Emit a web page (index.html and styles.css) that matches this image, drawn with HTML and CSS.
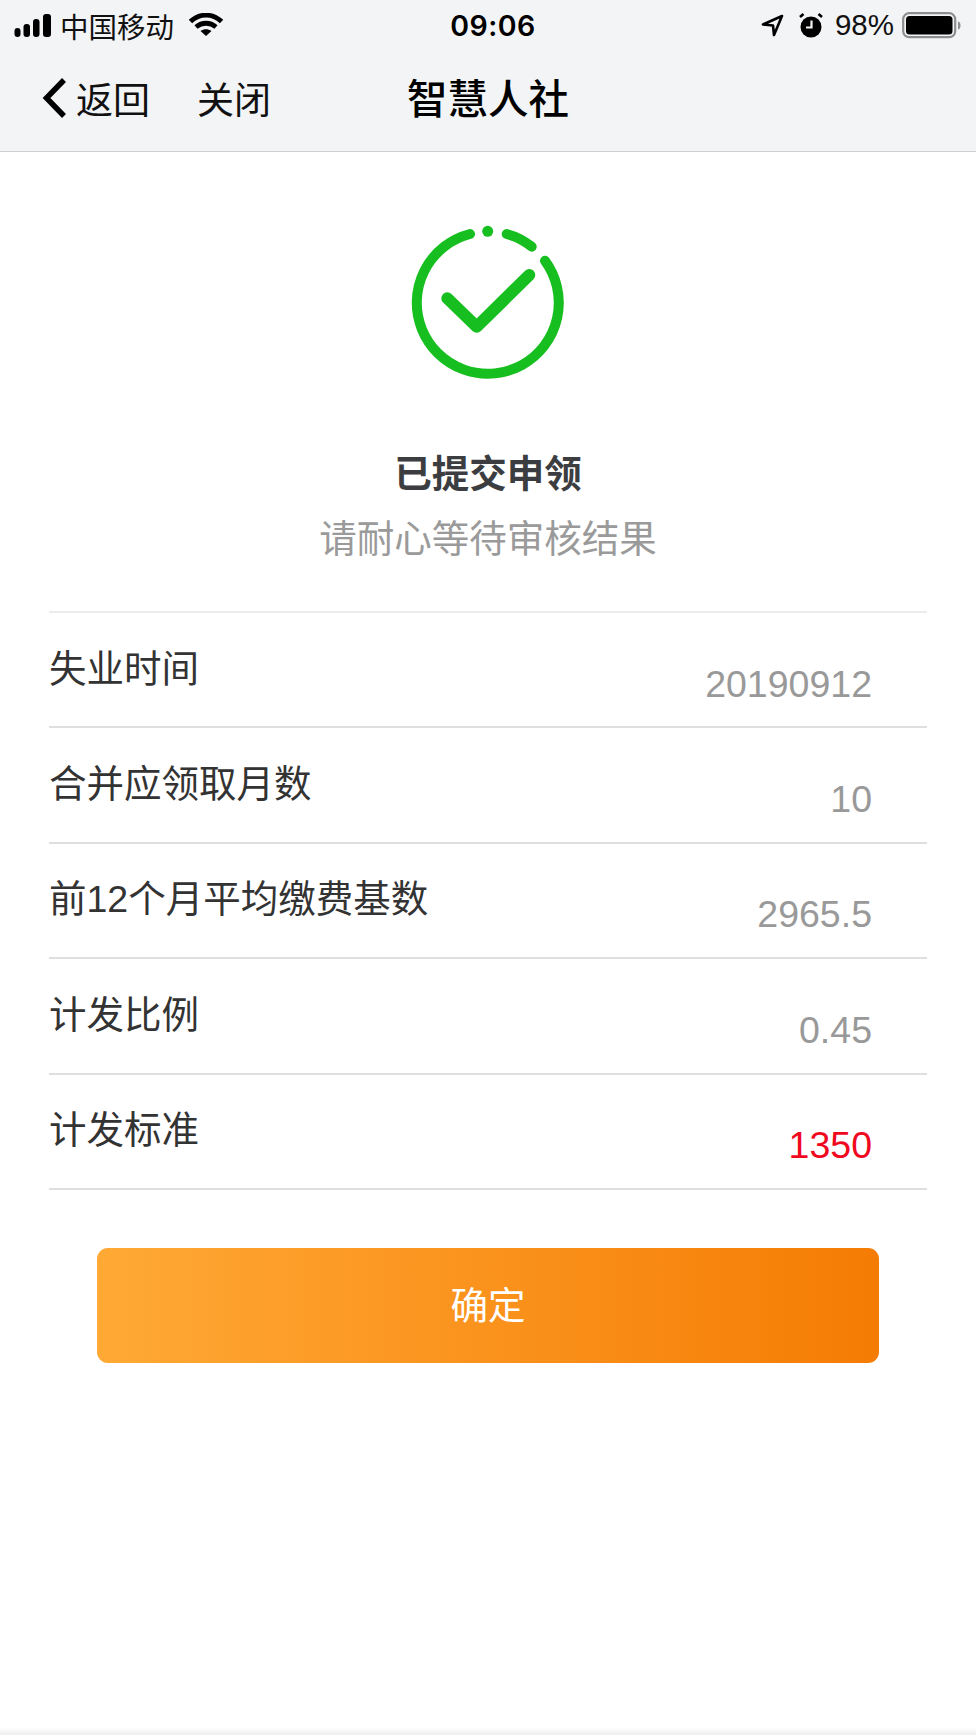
FILE: index.html
```html
<!DOCTYPE html>
<html lang="zh">
<head>
<meta charset="utf-8">
<title>智慧人社</title>
<link rel="stylesheet" href="styles.css">
</head>
<body>
<div class="page">
  <header class="top">
    <div class="status">
      <div class="status-left">
        <svg class="signal" width="38" height="23" viewBox="0 0 38 23"><rect x="0.500" y="14" width="6" height="9" rx="3"/><rect x="9.500" y="10" width="6.500" height="13" rx="3"/><rect x="19" y="5" width="6.500" height="18" rx="3"/><rect x="29" y="0" width="8" height="23" rx="3"/></svg>
        <span class="carrier">中国移动</span>
        <svg class="wifi" width="34" height="23" viewBox="0 0 34 23"><path d="M1.500 8.500C10.500 0 23.500 0 32.500 8.500" fill="none" stroke="#000" stroke-width="4.800"/><path d="M7 14C13 9 21 9 27 14" fill="none" stroke="#000" stroke-width="4.800"/><path d="M11.500 18C15 15.500 19 15.500 22.500 18L17 23Z"/></svg>
      </div>
      <div class="clock">09:06</div>
      <div class="status-right">
        <svg class="loc" width="23" height="23" viewBox="0 0 23 23"><path d="M21 2L2 10.500L12 11.500L13 21Z" fill="none" stroke="#000" stroke-width="2.600" stroke-linejoin="round"/></svg>
        <svg class="alarm" width="24" height="25" viewBox="0 0 24 25"><path d="M1 4L4.500 1M23 4L19.500 1" stroke="#000" stroke-width="2.600" fill="none"/><circle cx="12" cy="14" r="10.500"/><path d="M12.500 7.500V14.500H7" stroke="#f3f4f6" stroke-width="2.200" fill="none"/></svg>
        <span class="pct">98%</span>
        <svg class="batt" width="61" height="27" viewBox="0 0 61 27"><rect x="1.200" y="1.200" width="52" height="24" rx="6" fill="none" stroke="#8e8e90" stroke-width="2.200"/><rect x="4" y="4" width="46.500" height="18.500" rx="3.500"/><path d="M56 9.500C58 10 58.500 11.500 58.500 13.500C58.500 15.500 58 17 56 17.500Z" fill="#8e8e90"/></svg>
      </div>
    </div>
    <nav class="nav">
      <div class="nav-left">
        <svg class="back" width="26" height="42" viewBox="0 0 26 42"><path d="M22 3L4.500 21L22 39" fill="none" stroke="#000" stroke-width="5.500"/></svg>
        <span class="nav-link">返回</span>
        <span class="nav-link close">关闭</span>
      </div>
      <h1 class="title">智慧人社</h1>
    </nav>
  </header>

  <main class="content">
    <svg class="ok" width="156" height="156" viewBox="0 0 156 156">
      <g fill="none" stroke="#16bf1f" stroke-width="10" stroke-linecap="round" stroke-linejoin="round">
        <path d="M135 36.700A71 71 0 1 1 60 10"/>
        <path d="M96.700 10C106 12.500 114.500 17 121.700 22.700"/>
        <path d="M37.300 74.300L66.700 102.700L119.300 51" stroke-width="12"/>
      </g>
      <circle cx="77.700" cy="7.300" r="5.500" fill="#16bf1f"/>
    </svg>
    <h2 class="result">已提交申领</h2>
    <p class="hint">请耐心等待审核结果</p>

    <section class="list">
      <div class="row"><span class="label">失业时间</span><span class="val">20190912</span></div>
      <div class="row"><span class="label">合并应领取月数</span><span class="val">10</span></div>
      <div class="row"><span class="label">前12个月平均缴费基数</span><span class="val">2965.5</span></div>
      <div class="row"><span class="label">计发比例</span><span class="val">0.45</span></div>
      <div class="row"><span class="label">计发标准</span><span class="val red">1350</span></div>
    </section>

    <button class="confirm">确定</button>
  </main>
  <div class="edge"></div>
</div>
</body>
</html>
```

FILE: styles.css
```css
* { box-sizing: border-box; }
html, body { margin: 0; padding: 0; background: #fff; }
body { font-family: "Liberation Sans", "Noto Sans CJK SC", sans-serif; overflow: hidden; }
.page { width: 976px; height: 1735px; display: flex; flex-direction: column; background: #fff; }

.top { height: 152px; background: #f3f4f6; border-bottom: 1px solid #cfcfd1; flex: none; }
.status { height: 50px; padding: 0 10px 0 14px; display: grid; grid-template-columns: 1fr auto 1fr; align-items: center; }
.status-left { display: flex; align-items: center; }
.signal { fill: #000; margin-right: 8px; }
.carrier { font-size: 28.500px; color: #111; }
.wifi { margin-left: 15px; margin-top: -2px; }
.clock { margin-left: 6px; font-family: Inter, "Liberation Sans", sans-serif; font-size: 28.500px; font-weight: 600; letter-spacing: 0.500px; color: #000; }
.status-right { display: flex; align-items: center; justify-content: flex-end; padding-right: 3px; }
.loc { margin-right: 15px; }
.alarm { margin-right: 12px; }
.pct { font-size: 29.500px; color: #111; margin-right: 8px; }

.nav { height: 101px; position: relative; display: flex; align-items: center; justify-content: center; }
.nav-left { position: absolute; left: 42px; top: 0; bottom: 6px; display: flex; align-items: center; }
.back { margin-right: 8px; }
.nav-link { font-size: 37px; color: #111; }
.close { margin-left: 47px; }
.title { margin: 0 0 8px; font-size: 40.500px; font-weight: 500; color: #000; }

.content { flex: 1; padding: 72px 49px 0; display: flex; flex-direction: column; align-items: center; }
.ok { display: block; margin-bottom: 65px; }
.result { margin: 0; height: 58px; line-height: 58px; font-size: 37.500px; font-weight: 700; color: #3c3d40; }
.hint { margin: 7px 0 0; height: 58px; line-height: 58px; font-size: 37.500px; color: #9a9a9a; }

.list { width: 100%; margin-top: 43px; border-top: 2px solid #ececec; }
.row { height: 115.400px; border-bottom: 2px solid #dfdfdf; display: flex; justify-content: space-between; }
.label { font-size: 37.500px; line-height: 54px; padding-top: 28.500px; color: #333; }
.val { font-size: 37.500px; line-height: 44px; padding: 48.500px 55px 0 0; color: #999; }
.red { color: #f0081e; }

.confirm { width: 782px; height: 115px; margin-top: 58px; padding: 0 0 6px; border: 0; border-radius: 11px; background: linear-gradient(90deg, #ffa935, #f57c04); color: #fff; font-family: inherit; font-size: 37.500px; }

.edge { height: 8px; flex: none; background: linear-gradient(#fff, #efefef); }
```
